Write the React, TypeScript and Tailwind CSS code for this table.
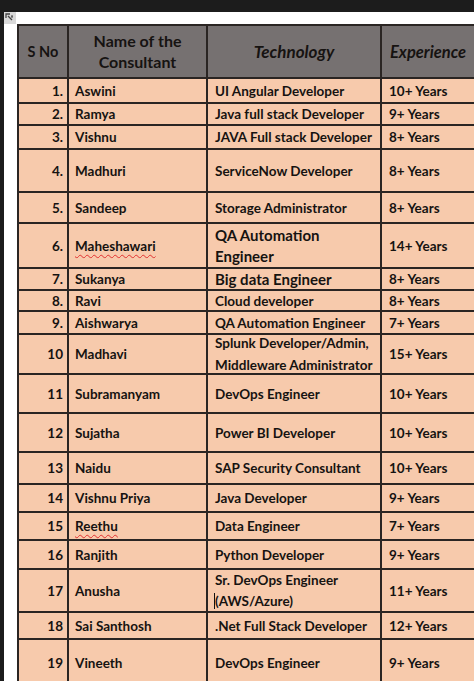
import React from "react";

type Row = {
  n: string;
  name: React.ReactNode;
  tech: React.ReactNode;
  exp: string;
  h: number;
};

const squiggle = "underline decoration-wavy decoration-[#e03030] decoration-1 underline-offset-[3px]";

const rows: Row[] = [
  { n: "1.", name: "Aswini", tech: "UI Angular Developer", exp: "10+ Years", h: 25 },
  { n: "2.", name: "Ramya", tech: "Java full stack Developer", exp: "9+ Years", h: 22 },
  { n: "3.", name: "Vishnu", tech: "JAVA Full stack Developer", exp: "8+ Years", h: 24 },
  { n: "4.", name: "Madhuri", tech: "ServiceNow Developer", exp: "8+ Years", h: 43 },
  { n: "5.", name: "Sandeep", tech: "Storage Administrator", exp: "8+ Years", h: 31 },
  {
    n: "6.",
    name: <span className={squiggle}>Maheshawari</span>,
    tech: (
      <span className="text-[15px] leading-[21px] block">
        QA Automation
        <br />
        Engineer
      </span>
    ),
    exp: "14+ Years",
    h: 45,
  },
  { n: "7.", name: "Sukanya", tech: <span className="text-[15px]">Big data Engineer</span>, exp: "8+ Years", h: 22 },
  { n: "8.", name: "Ravi", tech: "Cloud developer", exp: "8+ Years", h: 21 },
  { n: "9.", name: "Aishwarya", tech: "QA Automation Engineer", exp: "7+ Years", h: 23 },
  {
    n: "10",
    name: "Madhavi",
    tech: (
      <span className="block leading-[22px] -my-[3px]">
        Splunk Developer/Admin,
        <br />
        Middleware Administrator
      </span>
    ),
    exp: "15+ Years",
    h: 40,
  },
  { n: "11", name: "Subramanyam", tech: "DevOps Engineer", exp: "10+ Years", h: 39 },
  { n: "12", name: "Sujatha", tech: "Power BI Developer", exp: "10+ Years", h: 39 },
  { n: "13", name: "Naidu", tech: "SAP Security Consultant", exp: "10+ Years", h: 32 },
  { n: "14", name: "Vishnu Priya", tech: "Java Developer", exp: "9+ Years", h: 28 },
  { n: "15", name: <span className={squiggle}>Reethu</span>, tech: "Data Engineer", exp: "7+ Years", h: 28 },
  { n: "16", name: "Ranjith", tech: "Python Developer", exp: "9+ Years", h: 29 },
  {
    n: "17",
    name: "Anusha",
    tech: (
      <span className="block leading-[21px] -my-[1px]">
        Sr. DevOps Engineer
        <br />
        <span className="border-l border-[#111] -ml-[1px]">(AWS/Azure)</span>
      </span>
    ),
    exp: "11+ Years",
    h: 43,
  },
  { n: "18", name: "Sai Santhosh", tech: ".Net Full Stack Developer", exp: "12+ Years", h: 27 },
  { n: "19", name: "Vineeth", tech: "DevOps Engineer", exp: "9+ Years", h: 48 },
];

const cell = "border-2 border-[#2a2523] align-middle leading-[16px]";

export default function App() {
  return (
    <div
      className="w-[474px] h-[681px] overflow-hidden bg-[#1c1c1c] pl-[4px] pt-[12px]"
      style={{ fontFamily: "Lato, 'Open Sans', sans-serif" }}
    >
      <div className="relative h-[700px] bg-white pl-[13px] pt-[12px]">
        <div className="absolute left-0 top-0 w-[12px] h-[12px] bg-[#d9d9d9] flex items-center justify-center">
          <svg width="10" height="10" viewBox="0 0 10 10">
            <path d="M1 5 V1 H5 M3 3 L7 7" stroke="#444" strokeWidth="1.3" fill="none" />
            <path d="M7 2 V4 M8 4 H6" stroke="#444" strokeWidth="1" fill="none" />
          </svg>
        </div>
        <table className="border-collapse table-fixed w-[457px] text-[#161311] font-bold text-[13.5px]">
          <colgroup>
            <col className="w-[50px]" />
            <col className="w-[139px]" />
            <col className="w-[174px]" />
            <col className="w-[94px]" />
          </colgroup>
          <thead>
            <tr className="h-[53px] bg-[#767171]">
              <th className={`${cell} text-center text-[14.5px]`}>S No</th>
              <th className={`${cell} text-center text-[16px] !leading-[21px] pb-[2px]`}>
                Name of the
                <br />
                Consultant
              </th>
              <th className={`${cell} text-center text-[17px] italic`}>Technology</th>
              <th className={`${cell} text-center text-[16.5px] italic`}>Experience</th>
            </tr>
          </thead>
          <tbody>
            {rows.map((r) => (
              <tr key={r.n} className="bg-[#f7caac]" style={{ height: r.h }}>
                <td className={`${cell} text-right pr-[4px]`}>{r.n}</td>
                <td className={`${cell} pl-[6px] whitespace-nowrap`}>{r.name}</td>
                <td className={`${cell} pl-[7px] whitespace-nowrap`}>{r.tech}</td>
                <td className={`${cell} pl-[7px] whitespace-nowrap`}>{r.exp}</td>
              </tr>
            ))}
          </tbody>
        </table>
      </div>
    </div>
  );
}
